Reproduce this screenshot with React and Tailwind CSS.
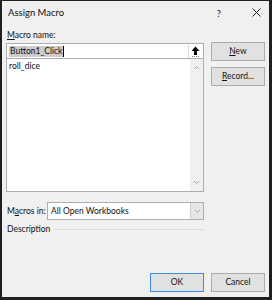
import React from "react";

const font = { fontFamily: 'Lato, "Open Sans", sans-serif' };

function Chevron({ up, className }) {
  return (
    <svg width="7" height="5" viewBox="0 0 7 5" className={className}>
      <path
        d={up ? "M1 4 L3.5 1.5 L6 4" : "M1 1 L3.5 3.5 L6 1"}
        fill="none"
        stroke="#a6a6a6"
        strokeWidth="1"
      />
    </svg>
  );
}

export default function App() {
  return (
    <div
      className="w-[272px] h-[300px] bg-[#f0f0f0] border-l-2 border-t border-r-[3px] border-b-[3px] border-[#1f1f1f] flex flex-col text-[#111] text-[8.5px] leading-none"
      style={font}
    >
      {/* title bar */}
      <div className="h-[23px] flex items-center pl-[6px] shrink-0">
        <span className="text-[9.5px] text-[#111]">Assign Macro</span>
        <span className="ml-auto text-[10px] mr-[31px] text-[#222]">?</span>
        <svg width="9" height="9" viewBox="0 0 9 9" className="mr-[8px]">
          <path d="M0.5 0.5 L8.5 8.5 M8.5 0.5 L0.5 8.5" stroke="#222" strokeWidth="1" />
        </svg>
      </div>

      <div className="flex-1 flex flex-col px-[4px]">
        <div className="flex gap-[7px]">
          {/* left column */}
          <div className="w-[198px] flex flex-col">
            <div className="h-[13px] flex items-center mt-[5px] mb-[1px] pl-[1px]">
              <span>
                <span className="underline">M</span>acro name:
              </span>
            </div>
            <div className="h-[16px] bg-white border border-[#adadad] flex items-center">
              <span className="ml-[2px] bg-[#cccccc] px-[1px] h-[11px] flex items-center">Button1_Click</span>
              <span className="w-px h-[11px] bg-black" />
              <div className="ml-auto mr-px h-[13px] w-[14px] bg-white border-l border-[#dadada] flex flex-col items-center justify-center">
                <svg width="9" height="11" viewBox="0 0 9 11">
                  <path d="M4.5 0.5 L0.5 5 L3 5 L3 9 L6 9 L6 5 L8.5 5 Z" fill="#000" />
                  <path d="M1 10.5 H8" stroke="#777" strokeWidth="1" strokeDasharray="1 1" />
                </svg>
              </div>
            </div>
            <div className="h-[133px] bg-white border border-t-0 border-[#adadad] flex">
              <div className="flex-1 pl-[2px] pt-[3px]">roll_dice</div>
              <div className="w-[13px] bg-[#f0f0f0] flex flex-col items-center justify-between py-[6px]">
                <Chevron up />
                <Chevron />
              </div>
            </div>

            <div className="flex items-center mt-[10px] h-[18px]">
              <span className="w-[41px] pl-[1px] whitespace-nowrap">
                M<span className="underline">a</span>cros in:
              </span>
              <div className="flex-1 h-[18px] bg-white border border-[#adadad] flex items-center">
                <span className="pl-[3px]">All Open Workbooks</span>
                <div className="ml-auto w-[13px] h-full bg-[#e6e6e6] border-l border-[#cfcfcf] flex items-center justify-center">
                  <Chevron />
                </div>
              </div>
            </div>

            <div className="flex items-center mt-[3px] h-[12px]">
              <span className="pl-[1px]">Description</span>
              <div className="flex-1 ml-[4px] h-px bg-[#dcdcdc]" />
            </div>
          </div>

          {/* right column */}
          <div className="w-[54px] flex flex-col gap-[6px] mt-[18px]">
            <div className="h-[19px] bg-[#e1e1e1] border border-[#adadad] flex items-center justify-center">
              <span>
                <span className="underline">N</span>ew
              </span>
            </div>
            <div className="h-[19px] bg-[#e1e1e1] border border-[#adadad] flex items-center justify-center">
              <span>
                <span className="underline">R</span>ecord...
              </span>
            </div>
          </div>
        </div>

        <div className="mt-auto mb-[5px] flex justify-end gap-[7px]">
          <div className="w-[54px] h-[19px] bg-[#e1e1e1] border border-[#3d8ee0] flex items-center justify-center">
            OK
          </div>
          <div className="w-[54px] h-[19px] bg-[#e1e1e1] border border-[#adadad] flex items-center justify-center">
            Cancel
          </div>
        </div>
      </div>
    </div>
  );
}
